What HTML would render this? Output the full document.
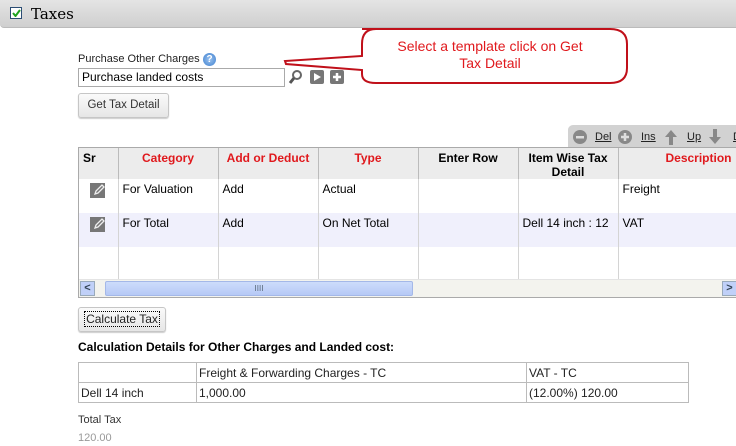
<!DOCTYPE html>
<html><head><style>
*{margin:0;padding:0;box-sizing:border-box}
body{width:736px;height:446px;overflow:hidden;background:#fff;font-family:"Liberation Sans",Arial,sans-serif;font-size:12px;color:#000;position:relative}
.a{position:absolute}
.hdr{left:0;top:0;width:736px;height:28px;background:linear-gradient(#e4e4e4,#cfcfcf);border-bottom:1px solid #bbb;border-radius:0 0 0 4px}
.btn{border:1px solid #c6c6c6;border-radius:3px;background:linear-gradient(#fafafa,#e6e6e6);box-shadow:0 1px 1px #ccc;font-size:12px;color:#333;text-align:center}
table{border-collapse:collapse}
.g td,.g th{border-right:1px solid #d4d4d4;padding:0 4px;vertical-align:top;text-align:left;font-weight:normal}
.g td{padding-top:3px!important}
.g th{background:#ececec;font-weight:bold;text-align:center;padding-top:3px;font-size:12px;border-right:1px solid #bbb}
.r{color:#e0191d}
.c td{border:1px solid #bbb;padding:0 2px;height:20px;font-size:12px;color:#222}
</style></head><body>
<div class="a hdr"></div>
<div class="a" style="left:10px;top:7px;width:12px;height:12px;border:1px solid #2b4d73;background:#fff"></div>
<svg class="a" style="left:12px;top:9px" width="9" height="8"><path d="M1 4 L3.5 7 L8 1" stroke="#1fa31f" stroke-width="2" fill="none"/></svg>
<div class="a" style="left:31px;top:5px;font-family:'DejaVu Serif','Liberation Serif',serif;font-size:15px">Taxes</div>

<div class="a" style="left:78px;top:53px;font-size:11px;color:#222">Purchase Other Charges</div>
<div class="a" style="left:203px;top:53px;width:13px;height:13px;border-radius:50%;background:radial-gradient(#9cc3ef,#3d7fcf);color:#fff;font-size:10px;font-weight:bold;text-align:center;line-height:13px">?</div>
<div class="a" style="left:78px;top:68px;width:207px;height:19px;border:1px solid #aaa;padding:1px 3px;font-size:12px">Purchase landed costs</div>
<svg class="a" style="left:288px;top:69px" width="60" height="16"><circle cx="9" cy="6" r="4" stroke="#666" stroke-width="2" fill="none"/><path d="M6 9 L2 14" stroke="#555" stroke-width="3"/><rect x="22" y="1" width="14" height="14" rx="2" fill="#777"/><path d="M26 4 L33 8 L26 12Z" fill="#fff"/><rect x="42" y="1" width="14" height="14" rx="2" fill="#777"/><path d="M49 4 V12 M45 8 H53" stroke="#fff" stroke-width="2.5"/></svg>
<div class="a btn" style="left:78px;top:93px;width:91px;height:25px;line-height:23px;font-size:11.5px">Get Tax Detail</div>

<svg class="a" style="left:280px;top:26px" width="352" height="60"><path d="M82 3 H330 Q347 3 347 18 V42 Q347 57 330 57 H96 Q82 57 82 48 V44 L6 38 L5 35 L82 30 V18 Q82 3 96 3Z" fill="#fff" stroke="#c0101a" stroke-width="2"/></svg>
<div class="a" style="left:360px;top:38px;width:260px;text-align:center;color:#e0191d;font-size:14px;line-height:17px">Select a template click on Get<br>Tax Detail</div>

<div class="a" style="left:568px;top:125px;width:168px;height:23px;background:#d2d2d2;border-radius:5px 0 0 0"></div>
<svg class="a" style="left:572px;top:128px" width="164" height="18"><circle cx="8" cy="9" r="7" fill="#888"/><rect x="4" y="8" width="8" height="2.5" fill="#ddd"/><circle cx="53" cy="9" r="7" fill="#888"/><path d="M53 5 V13 M49 9 H57" stroke="#ddd" stroke-width="2.5"/><path d="M99 2 L93 9 H97 V17 H101 V9 H105Z" fill="#888"/><path d="M143 16 L137 9 H141 V1 H145 V9 H149Z" fill="#888"/></svg>
<div class="a" style="left:595px;top:131px;font-size:11px;text-decoration:underline;color:#222">Del</div>
<div class="a" style="left:641px;top:131px;font-size:11px;text-decoration:underline;color:#222">Ins</div>
<div class="a" style="left:687px;top:131px;font-size:11px;text-decoration:underline;color:#222">Up</div>
<div class="a" style="left:733px;top:131px;font-size:11px;text-decoration:underline;color:#222">D</div>

<div class="a" style="left:78px;top:147px;width:660px;height:151px;border:1px solid #aaa;border-right:none;overflow:hidden">
<table class="g" style="width:700px;table-layout:fixed">
<colgroup><col style="width:39px"><col style="width:100px"><col style="width:100px"><col style="width:100px"><col style="width:100px"><col style="width:100px"><col style="width:161px"></colgroup>
<tr style="height:30px"><th style="text-align:left">Sr</th><th class="r">Category</th><th class="r">Add or Deduct</th><th class="r">Type</th><th>Enter Row</th><th style="line-height:14px">Item Wise Tax Detail</th><th class="r">Description</th></tr>
<tr style="height:34px"><td><svg width="16" height="16" style="margin-left:7px"><rect x="0" y="1" width="15" height="15" fill="#777"/><path d="M5 12 L6 9 L12 3 L14 5 L8 11Z" fill="none" stroke="#eee" stroke-width="1.3"/></svg></td><td>For Valuation</td><td>Add</td><td>Actual</td><td></td><td></td><td>Freight</td></tr>
<tr style="height:34px;background:#f0f0fc"><td><svg width="16" height="16" style="margin-left:7px"><rect x="0" y="1" width="15" height="15" fill="#777"/><path d="M5 12 L6 9 L12 3 L14 5 L8 11Z" fill="none" stroke="#eee" stroke-width="1.3"/></svg></td><td>For Total</td><td>Add</td><td>On Net Total</td><td></td><td>Dell 14 inch : 12</td><td>VAT</td></tr>
<tr style="height:33px"><td></td><td></td><td></td><td></td><td></td><td></td><td></td></tr>
</table>
<div class="a" style="left:0;top:131px;width:660px;height:18px;background:#f3f3ee;border-top:1px solid #e4e4e4"></div>
<div class="a" style="left:1px;top:133px;width:15px;height:15px;background:#c0d0f8;border:1px solid #9ab;font-size:11px;font-weight:bold;color:#345;text-align:center;line-height:13px">&lt;</div>
<div class="a" style="left:26px;top:133px;width:308px;height:15px;background:linear-gradient(#cddcfb,#b6c9f6);border:1px solid #a4b8e8;border-radius:2px;text-align:center;font-size:8px;color:#567;line-height:13px">IIII</div>
<div class="a" style="left:643px;top:133px;width:15px;height:15px;background:#c0d0f8;border:1px solid #9ab;font-size:11px;font-weight:bold;color:#345;text-align:center;line-height:13px">&gt;</div>
</div>

<div class="a btn" style="left:78px;top:307px;width:88px;height:25px;line-height:23px;color:#222"><span style="border:1px dotted #000;padding:0 1px">Calculate Tax</span></div>
<div class="a" style="left:78px;top:340px;font-weight:bold;font-size:12px">Calculation Details for Other Charges and Landed cost:</div>
<table class="a c" style="left:78px;top:362px;width:611px">
<colgroup><col style="width:118px"><col style="width:330px"><col style="width:162px"></colgroup>
<tr><td></td><td>Freight &amp; Forwarding Charges - TC</td><td>VAT - TC</td></tr>
<tr><td>Dell 14 inch</td><td>1,000.00</td><td>(12.00%) 120.00</td></tr>
</table>
<div class="a" style="left:78px;top:414px;font-size:11px;color:#333">Total Tax</div>
<div class="a" style="left:78px;top:432px;font-size:11px;color:#999">120.00</div>
</body></html>
